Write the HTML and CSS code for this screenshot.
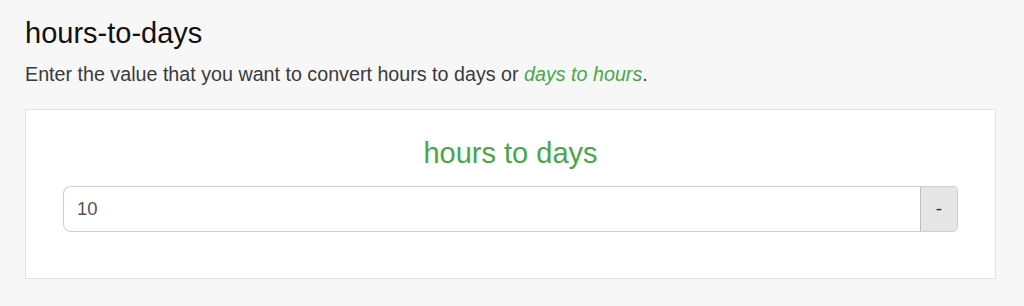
FILE: index.html
```html
<!DOCTYPE html>
<html lang="en">
<head>
<meta charset="utf-8">
<title>hours-to-days</title>
<link rel="stylesheet" href="styles.css">
</head>
<body>
<main class="page">
  <h1 class="title">hours-to-days</h1>
  <p class="intro">Enter the value that you want to convert hours to days or <a class="link" href="#">days to hours</a>.</p>
  <section class="panel">
    <h2 class="panel-title">hours to days</h2>
    <div class="input-group">
      <input class="field" type="text" value="10">
      <span class="addon">-</span>
    </div>
  </section>
</main>
</body>
</html>
```

FILE: styles.css
```css
html, body {
  margin: 0;
  padding: 0;
  background: #f7f7f7;
}

body {
  font-family: "Liberation Sans", Arial, sans-serif;
  color: #333;
}

.page {
  padding: 16px 0 0 25px;
  width: 971px;
}

.title {
  margin: 0;
  font-size: 29px;
  line-height: 34px;
  font-weight: normal;
  color: #111;
}

.intro {
  margin: 12px 0 0;
  font-size: 19.7px;
  line-height: 24px;
  color: #3a3a3a;
}

.link {
  color: #48a648;
  font-style: italic;
  text-decoration: none;
}

.panel {
  margin-top: 23px;
  background: #fff;
  border: 1px solid #e3e3e3;
  padding: 26px 37px 46px 37px;
}

.panel-title {
  margin: 0 0 16px;
  text-align: center;
  font-size: 29px;
  line-height: 34px;
  font-weight: normal;
  color: #48a648;
}

.input-group {
  display: flex;
  height: 46px;
}

.field {
  flex: 1;
  min-width: 0;
  box-sizing: border-box;
  height: 46px;
  margin: 0;
  padding: 0 13px;
  border: 1px solid #cfcfcf;
  border-right: none;
  border-radius: 8px 0 0 8px;
  font-family: "Liberation Sans", Arial, sans-serif;
  font-size: 18.5px;
  color: #555;
  background: #fff;
  outline: none;
}

.addon {
  box-sizing: border-box;
  width: 38px;
  height: 46px;
  display: flex;
  align-items: center;
  justify-content: center;
  background: #e6e6e6;
  border: 1px solid #cfcfcf;
  border-left: 1px solid #bdbdbd;
  border-radius: 0 5px 5px 0;
  font-size: 19px;
  color: #333;
}
```
